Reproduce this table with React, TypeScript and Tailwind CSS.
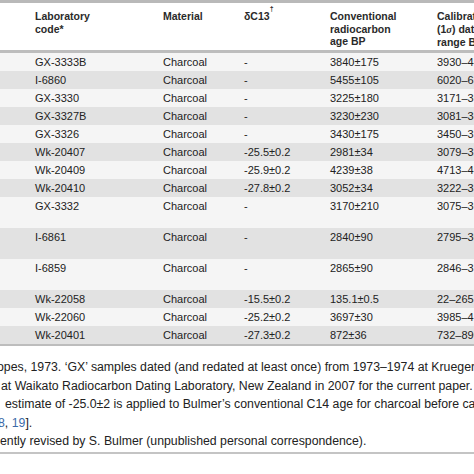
import React from 'react';

type Row = {
  code: string;
  material: string;
  delta: string;
  age: string;
  range: string;
  tall?: boolean;
};

const rows: Row[] = [
  { code: 'GX-3333B', material: 'Charcoal', delta: '-', age: '3840±175', range: '3930–4420' },
  { code: 'I-6860', material: 'Charcoal', delta: '-', age: '5455±105', range: '6020–6310' },
  { code: 'GX-3330', material: 'Charcoal', delta: '-', age: '3225±180', range: '3171–3690' },
  { code: 'GX-3327B', material: 'Charcoal', delta: '-', age: '3230±230', range: '3081–3830' },
  { code: 'GX-3326', material: 'Charcoal', delta: '-', age: '3430±175', range: '3450–3900' },
  { code: 'Wk-20407', material: 'Charcoal', delta: '-25.5±0.2', age: '2981±34', range: '3079–3210' },
  { code: 'Wk-20409', material: 'Charcoal', delta: '-25.9±0.2', age: '4239±38', range: '4713–4840' },
  { code: 'Wk-20410', material: 'Charcoal', delta: '-27.8±0.2', age: '3052±34', range: '3222–3340' },
  { code: 'GX-3332', material: 'Charcoal', delta: '-', age: '3170±210', range: '3075–3640', tall: true },
  { code: 'I-6861', material: 'Charcoal', delta: '-', age: '2840±90', range: '2795–3080', tall: true },
  { code: 'I-6859', material: 'Charcoal', delta: '-', age: '2865±90', range: '2846–3140', tall: true },
  { code: 'Wk-22058', material: 'Charcoal', delta: '-15.5±0.2', age: '135.1±0.5', range: '22–265' },
  { code: 'Wk-22060', material: 'Charcoal', delta: '-25.2±0.2', age: '3697±30', range: '3985–4150' },
  { code: 'Wk-20401', material: 'Charcoal', delta: '-27.3±0.2', age: '872±36', range: '732–890' },
];

const cols = 'grid grid-cols-[163px_81px_86px_107px_140px]';

export default function App() {
  return (
    <div className="w-[474px] h-[474px] overflow-hidden bg-white text-[#222] font-['Liberation_Sans',Arial,sans-serif]">
      <div className="w-[560px]">
        <div className="h-[3px] bg-[#b9b9b9]" />

        {/* header */}
        <div className={`${cols} h-[47px] pt-[7px] text-[10.5px] leading-[12.5px] font-bold text-[#2a2a2a]`}>
          <div className="pl-[35px]">
            Laboratory
            <br />
            code*
          </div>
          <div>Material</div>
          <div>
            δC13<sup className="text-[7px] align-top relative top-[-1px]">†</sup>
          </div>
          <div>
            Conventional
            <br />
            radiocarbon
            <br />
            age BP
          </div>
          <div>
            Calibrated
            <br />
            (1<i className="font-['Liberation_Serif',serif]">σ</i>) date
            <br />
            range BP
          </div>
        </div>
        <div className="h-[3px] bg-[#bdbdbd]" />

        {/* body */}
        {rows.map((r, i) => (
          <div
            key={r.code}
            className={`${cols} text-[11px] leading-[18px] ${r.tall ? 'h-[31px]' : 'h-[18px]'} ${
              i % 2 === 0 ? 'bg-[#f5f5f5]' : 'bg-[#e2e2e2]'
            }`}
          >
            <div className="pl-[35px]">{r.code}</div>
            <div>{r.material}</div>
            <div>{r.delta}</div>
            <div>{r.age}</div>
            <div>{r.range}</div>
          </div>
        ))}
        <div className="h-[2px] bg-[#bdbdbd]" />

        {/* footnotes */}
        <div className="pt-[12px] pb-[1px] text-[12.3px] leading-[18.5px] whitespace-nowrap">
          <div className="ml-[-3px]">opes, 1973. ‘GX’ samples dated (and redated at least once) from 1973–1974 at Krueger Enterprises</div>
          <div className="ml-[1px]">at Waikato Radiocarbon Dating Laboratory, New Zealand in 2007 for the current paper.</div>
          <div className="ml-[5px]">estimate of -25.0±2 is applied to Bulmer’s conventional C14 age for charcoal before calibration</div>
          <div className="ml-[-2px]">
            <span className="text-[#3b6aa8]">8</span>, <span className="text-[#3b6aa8]">19</span>].
          </div>
          <div>ently revised by S. Bulmer (unpublished personal correspondence).</div>
        </div>
        <div className="h-[2px] bg-[#c4c4c4]" />
      </div>
    </div>
  );
}
